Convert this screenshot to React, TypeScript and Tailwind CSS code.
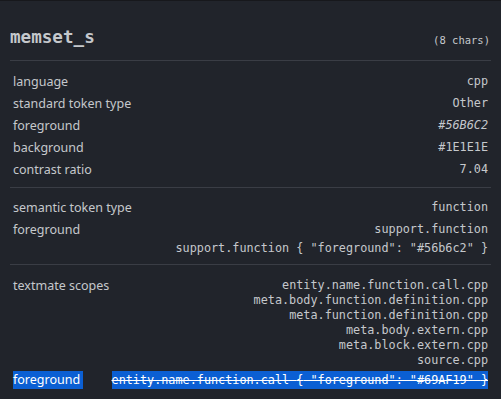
import React from 'react';

const mono = "font-['DejaVu_Sans_Mono','Liberation_Mono',monospace]";
const sans = "font-['Noto_Sans','Open_Sans',sans-serif]";

function Row({ label, children }: { label: string; children: React.ReactNode }) {
  return (
    <div className="flex h-[22px] items-center justify-between">
      <span className={`${sans} text-[12.5px] text-[#c5c8cc]`}>{label}</span>
      <span className={`${mono} text-[11.8px] text-[#c5c8cc]`}>{children}</span>
    </div>
  );
}

export default function App() {
  const scopes = [
    'entity.name.function.call.cpp',
    'meta.body.function.definition.cpp',
    'meta.function.definition.cpp',
    'meta.body.extern.cpp',
    'meta.block.extern.cpp',
    'source.cpp',
  ];

  return (
    <div className="h-[399px] w-[501px] overflow-hidden border-t border-[#17181c] bg-[#21242b]">
      {/* header */}
      <div className="mx-[10px] flex h-[60px] items-end justify-between border-b border-[#3a3d45] pb-[13px] pr-[1px]">
        <span className={`${mono} text-[17.6px] font-bold leading-none text-[#c5c8cc]`}>memset_s</span>
        <span className={`${mono} mb-[2px] text-[10.5px] leading-none text-[#c5c8cc]`}>(8 chars)</span>
      </div>

      {/* token info */}
      <div className="mx-[10px] border-b border-[#3a3d45] pl-[3px] pr-[3px] pt-[10px] pb-[6px]">
        <Row label="language">cpp</Row>
        <Row label="standard token type">Other</Row>
        <Row label="foreground"><i>#56B6C2</i></Row>
        <Row label="background">#1E1E1E</Row>
        <Row label="contrast ratio">7.04</Row>
      </div>

      {/* semantic */}
      <div className="mx-[10px] border-b border-[#3a3d45] pl-[3px] pr-[3px] pt-[9px] pb-[8px]">
        <Row label="semantic token type">function</Row>
        <Row label="foreground">support.function</Row>
        <div className={`${mono} text-right text-[11.8px] leading-[15px] text-[#c5c8cc]`}>
          support.function {'{'} "foreground": "#56b6c2" {'}'}
        </div>
      </div>

      {/* textmate */}
      <div className="mx-[10px] pl-[3px] pr-[3px] pt-[13px]">
        <div className="flex justify-between">
          <span className={`${sans} text-[12.5px] leading-[15px] text-[#c5c8cc]`}>textmate scopes</span>
          <div className={`${mono} flex flex-col items-end text-[11.8px] leading-[15px] text-[#c5c8cc]`}>
            {scopes.map(s => (
              <span key={s}>{s}</span>
            ))}
          </div>
        </div>
        <div className="mt-[3px] flex h-[18px] items-center justify-between">
          <span className={`${sans} bg-[#0b5fd3] pr-[3px] text-[12.5px] leading-[18px] text-white`}>foreground</span>
          <span className={`${mono} bg-[#0b5fd3] text-[11.8px] leading-[18px] text-white line-through`}>
            entity.name.function.call {'{'} "foreground": "#69AF19" {'}'}
          </span>
        </div>
      </div>
    </div>
  );
}
